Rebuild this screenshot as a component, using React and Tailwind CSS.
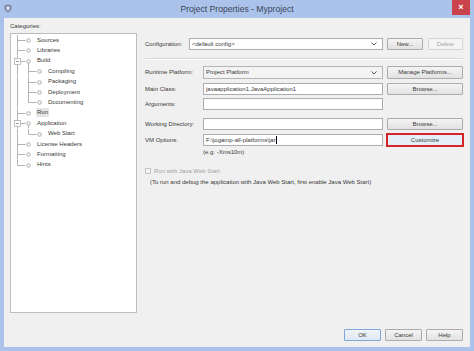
import React from "react";

const font = "font-['Liberation_Sans',Arial,sans-serif] text-[6px] text-[#383838]";
const btn =
  "flex items-center justify-center border border-[#acacac] bg-linear-to-b from-[#f4f4f4] to-[#e2e2e2] rounded-[1px] shrink-0";
const field = "flex items-center h-[12px] border border-[#abadb3] bg-white px-[2px] shrink-0";

function Chevron() {
  return (
    <svg width="6" height="4" viewBox="0 0 6 4" className="ml-auto mr-[3px]">
      <path d="M0.5 0.5 L3 3 L5.5 0.5" fill="none" stroke="#555" strokeWidth="1" />
    </svg>
  );
}

function TreeRow({ label, level = 0, toggle, lastChild, last, selected }) {
  const H = 10.4;
  const mid = 5.5;
  const line = "#b4b4b4";
  return (
    <div className="flex h-[10.4px] items-center">
      <svg width={level ? 37 : 26} height={H} className="shrink-0">
        <line x1="6.5" y1="0" x2="6.5" y2={last ? mid : H} stroke={line} strokeWidth="1" />
        {level === 0 ? (
          <>
            <line x1={toggle ? 9.5 : 6.5} y1={mid} x2="14.5" y2={mid} stroke={line} strokeWidth="1" />
            {toggle && (
              <>
                <line x1="17.5" y1={mid} x2="17.5" y2={H} stroke={line} strokeWidth="1" />
                <rect x="3.5" y="2.5" width="6" height="6" fill="#fff" stroke="#a6a6a6" strokeWidth="0.7" />
                <line x1="5" y1={mid} x2="8" y2={mid} stroke="#777" strokeWidth="0.7" />
              </>
            )}
            <circle cx="17.5" cy={mid} r="1.8" fill="#f6f6f6" stroke="#959595" strokeWidth="0.7" />
          </>
        ) : (
          <>
            <line x1="17.5" y1="0" x2="17.5" y2={lastChild ? mid : H} stroke={line} strokeWidth="1" />
            <line x1="17.5" y1={mid} x2="25.5" y2={mid} stroke={line} strokeWidth="1" />
            <circle cx="28.5" cy={mid} r="1.8" fill="#f6f6f6" stroke="#959595" strokeWidth="0.7" />
          </>
        )}
      </svg>
      <span className={selected ? "bg-[#e4e4e4] px-[1px] -ml-[1px] leading-[9px]" : ""}>{label}</span>
    </div>
  );
}

function Row({ label, children, className = "" }) {
  return (
    <div className={"flex items-center " + className}>
      <div className="w-[58px] shrink-0">{label}</div>
      {children}
    </div>
  );
}

export default function App() {
  return (
    <div className={"w-[474px] h-[351px] bg-[#abc3eb] flex flex-col overflow-hidden " + font}>
      {/* title bar */}
      <div className="h-[18px] flex items-start shrink-0">
        <svg width="8" height="9" viewBox="0 0 8 9" className="ml-[4px] mt-[4px]">
          <path d="M4 0.5 L7.5 1.8 L7.3 5 Q6.5 7.6 4 8.6 Q1.5 7.6 0.7 5 L0.5 1.8 Z" fill="#6f7f98" />
          <path d="M4 2 L6 2.8 L5.9 4.8 Q5.4 6.4 4 7 Q2.6 6.4 2.1 4.8 L2 2.8 Z" fill="#c9d4e6" />
        </svg>
        <div className="flex-1 text-center text-[8.6px] text-[#3a4558] leading-[18px] pl-[10px]">
          Project Properties - Myproject
        </div>
        <div className="w-[18px] h-[15px] bg-[#c8444a] mr-[4px] flex items-center justify-center text-white text-[9px] font-bold leading-none">
          ×
        </div>
      </div>

      {/* content */}
      <div className="flex-1 mx-[4px] mb-[4px] bg-[#f0f0f0] flex flex-col pt-[2px] pl-[6px] pr-[7px] pb-[6px]">
        <div className="flex flex-1">
          {/* categories */}
          <div className="w-[127px] flex flex-col shrink-0">
            <div className="h-[12px] leading-[12px]">Categories:</div>
            <div className="mt-[1px] h-[280px] bg-white border border-[#bdbdbd] pt-[1px]">
              <TreeRow label="Sources" />
              <TreeRow label="Libraries" />
              <TreeRow label="Build" toggle />
              <TreeRow label="Compiling" level={1} />
              <TreeRow label="Packaging" level={1} />
              <TreeRow label="Deployment" level={1} />
              <TreeRow label="Documenting" level={1} lastChild />
              <TreeRow label="Run" selected />
              <TreeRow label="Application" toggle />
              <TreeRow label="Web Start" level={1} lastChild />
              <TreeRow label="License Headers" />
              <TreeRow label="Formatting" />
              <TreeRow label="Hints" last />
            </div>
          </div>

          {/* settings */}
          <div className="flex-1 ml-[8px] pt-[18px] flex flex-col">
            <div className="flex items-center h-[12px]">
              <div className="w-[44px] shrink-0">Configuration:</div>
              <div className={field + " w-[194px]"}>
                <span>&lt;default config&gt;</span>
                <Chevron />
              </div>
              <div className={btn + " w-[36px] h-[12px] ml-[4px]"}>New...</div>
              <div className="flex items-center justify-center border border-[#d4d4d4] bg-[#f4f4f4] text-[#a6a6a6] rounded-[1px] w-[35px] h-[12px] ml-[5px]">
                Delete
              </div>
            </div>

            <div className="mt-[8px] border-t border-[#d6d6d6] border-b border-b-white" />

            <Row label="Runtime Platform:" className="mt-[6px] h-[13px]">
              <div className="flex items-center h-[13px] w-[180px] border border-[#b5b5b5] bg-[#f3f3f3] px-[2px] shrink-0">
                <span>Project Platform</span>
                <Chevron />
              </div>
              <div className={btn + " w-[76px] h-[13px] ml-[4px]"}>Manage Platforms...</div>
            </Row>

            <Row label="Main Class:" className="mt-[4px] h-[12px]">
              <div className={field + " w-[180px]"}>javaapplication1.JavaApplication1</div>
              <div className={btn + " w-[76px] h-[12px] ml-[4px]"}>Browse...</div>
            </Row>

            <Row label="Arguments:" className="mt-[3px] h-[12px]">
              <div className={field + " w-[180px]"} />
            </Row>

            <Row label="Working Directory:" className="mt-[8px] h-[12px]">
              <div className={field + " w-[180px]"} />
              <div className={btn + " w-[76px] h-[12px] ml-[4px]"}>Browse...</div>
            </Row>

            <Row label="VM Options:" className="mt-[4px] h-[12px]">
              <div className={field + " w-[180px]"}>
                <span>F:\jogamp-all-platforms\jar</span>
                <span className="w-[1px] h-[8px] bg-black" />
              </div>
              <div className="flex items-center justify-center w-[76px] h-[12px] ml-[4px] border border-[#d3262c] outline outline-[#d3262c] bg-[#e4eff9] shrink-0">
                Customize
              </div>
            </Row>

            <div className="h-[10px] leading-[10px] mt-[1px] pl-[58px]">(e.g. -Xms10m)</div>

            <div className="flex items-center h-[10px] mt-[9px] text-[#a3a3a3]">
              <div className="w-[6px] h-[6px] border border-[#c4c4c4] bg-[#f4f4f4] mr-[3px]" />
              Run with Java Web Start
            </div>
            <div className="h-[10px] leading-[10px] mt-[1px] pl-[5px]">
              (To run and debug the application with Java Web Start, first enable Java Web Start)
            </div>
          </div>
        </div>

        {/* dialog buttons */}
        <div className="flex justify-end gap-[4px] h-[12px] shrink-0">
          <div className="flex items-center justify-center border border-[#7fa8d8] bg-linear-to-b from-[#f0f4f9] to-[#e0e8f2] rounded-[1px] w-[37px]">
            OK
          </div>
          <div className={btn + " w-[37px]"}>Cancel</div>
          <div className={btn + " w-[37px]"}>Help</div>
        </div>
      </div>
    </div>
  );
}
